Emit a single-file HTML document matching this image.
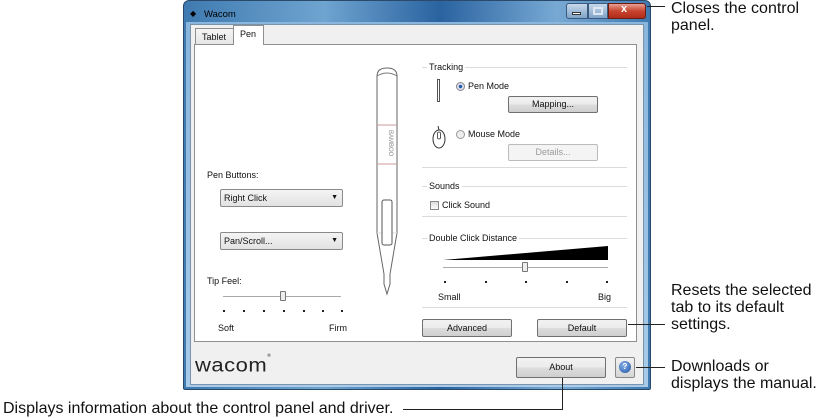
<!DOCTYPE html>
<html><head><style>
*{margin:0;padding:0;box-sizing:border-box}
body{width:819px;height:418px;background:#fff;position:relative;overflow:hidden;font-family:"Liberation Sans",sans-serif;}
.a{position:absolute}
.t{position:absolute;font-size:9px;color:#111;white-space:nowrap}
.ann{position:absolute;font-size:16px;color:#111;line-height:17px;white-space:nowrap}
.btn{position:absolute;border:1px solid #707070;border-radius:2px;background:linear-gradient(#f2f2f2,#ebebeb 50%,#dddddd 51%,#cfcfcf);font-size:9px;text-align:center;color:#111}
.dd{position:absolute;border:1px solid #8a8a8a;border-radius:2px;background:linear-gradient(#f4f4f4,#e2e2e2);font-size:9px;padding-left:3px;color:#111}
.sep{position:absolute;height:1px;background:#dcdcdc}
.dot{position:absolute;width:2px;height:2px;background:#222}
.ln{position:absolute;background:#222}
</style></head><body>
<div class="a" style="left:183px;top:0;width:468px;height:390px;border:1px solid #2b4a6b;border-radius:6px 6px 2px 2px;background:linear-gradient(90deg,#3f7ab0,#6fa4d0 30%,#2a63a0 55%,#78a9d4 80%,#3f7ab0)"></div>
<div class="a" style="left:186px;top:22px;width:462px;height:365px;background:linear-gradient(#8ab5dc,#a9cbe8);"></div>
<div class="t" style="left:190px;top:9px;font-size:8px;color:#000">&#9670;</div>
<div class="t" style="left:204px;top:9px;font-size:9.5px;color:#000">Wacom</div>
<div class="a" style="left:566px;top:3px;width:22px;height:16px;border:1px solid #3a5a80;border-radius:3px 0 0 3px;background:linear-gradient(#c7d8ea,#7fa3c8)"></div>
<div class="a" style="left:572px;top:12px;width:9px;height:3px;background:#fff;border:1px solid #333"></div>
<div class="a" style="left:588px;top:3px;width:20px;height:16px;border:1px solid #3a5a80;background:linear-gradient(#c7d8ea,#7fa3c8)"></div>
<div class="a" style="left:593px;top:7px;width:10px;height:8px;border:2px solid #dfe8f2"></div>
<div class="a" style="left:608px;top:3px;width:38px;height:16px;border:1px solid #6b1d14;border-radius:0 3px 3px 0;background:linear-gradient(#e8a091,#c8442f 50%,#b02c1a)"></div>
<div class="t" style="left:621px;top:3px;font-size:11px;font-weight:bold;color:#fff">x</div>
<div class="a" style="left:190px;top:24px;width:454px;height:361px;background:#f0f0f0;border:1px solid #7a93ad"></div>
<div class="a" style="left:195px;top:28px;width:39px;height:17px;border:1px solid #8e8f8f;border-bottom:none;background:linear-gradient(#f5f5f5,#e5e5e5)"></div>
<div class="t" style="left:202px;top:32px">Tablet</div>
<div class="a" style="left:194px;top:44px;width:443px;height:298px;background:#fff;border:1px solid #8e8f8f"></div>
<div class="a" style="left:233px;top:25px;width:31px;height:20px;border:1px solid #8e8f8f;border-bottom:none;background:#fff"></div>
<div class="t" style="left:240px;top:29px">Pen</div>
<div class="t" style="left:207px;top:170px">Pen Buttons:</div>
<div class="dd" style="left:220px;top:189px;width:123px;height:18px;line-height:16px">Right Click<span style="position:absolute;right:4px;font-size:7px">&#9660;</span></div>
<div class="dd" style="left:220px;top:232px;width:123px;height:18px;line-height:16px">Pan/Scroll...<span style="position:absolute;right:4px;font-size:7px">&#9660;</span></div>
<div class="t" style="left:207px;top:276px">Tip Feel:</div>
<div class="a" style="left:223px;top:296px;width:118px;height:1px;background:#aaa"></div>
<div class="a" style="left:280px;top:291px;width:6px;height:10px;border:1px solid #777;border-radius:1px;background:#eee"></div>
<div class="dot" style="left:223px;top:310px"></div><div class="dot" style="left:243px;top:310px"></div><div class="dot" style="left:263px;top:310px"></div><div class="dot" style="left:283px;top:310px"></div><div class="dot" style="left:303px;top:310px"></div><div class="dot" style="left:322px;top:310px"></div><div class="dot" style="left:341px;top:310px"></div>
<div class="t" style="left:218px;top:323px">Soft</div>
<div class="t" style="left:329px;top:323px">Firm</div>
<svg class="a" style="left:374px;top:66px" width="26" height="232" viewBox="0 0 26 232">
<path d="M3 10 Q3 2 13 2 Q23 2 23 10 L23 167 L16 208 L16 218 L13 228 L10 218 L10 208 L3 167 Z" fill="#fff" stroke="#666" stroke-width="1"/>
<path d="M3 10 Q13 4 23 10" fill="none" stroke="#777"/>
<line x1="3" y1="59" x2="23" y2="59" stroke="#c99"/>
<line x1="3" y1="98" x2="23" y2="98" stroke="#c99"/>
<line x1="3" y1="167" x2="23" y2="167" stroke="#ddd"/>
<rect x="8" y="134" width="10" height="45" rx="2" fill="#fff" stroke="#555"/>
<text x="15" y="64" font-size="6" fill="#888" transform="rotate(90 15 64)" font-family="Liberation Sans">BAMBOO</text>
</svg>
<div class="sep" style="left:422px;top:67px;width:205px"></div>
<div class="t" style="left:427px;top:62px;background:#fff;padding:0 2px">Tracking</div>
<div class="a" style="left:437px;top:79px;width:3px;height:23px;border:1px solid #555"></div>
<div class="a" style="left:456px;top:82px;width:9px;height:9px;border-radius:50%;border:1px solid #888;background:radial-gradient(#1e5fa8 30%,#dde 40%)"></div>
<div class="t" style="left:468px;top:81px">Pen Mode</div>
<div class="btn" style="left:508px;top:96px;width:90px;height:17px;line-height:15px">Mapping...</div>
<svg class="a" style="left:430px;top:124px" width="18" height="28"><path d="M8 2 L9 6" stroke="#333"/><ellipse cx="9" cy="15" rx="6" ry="9" fill="#fff" stroke="#333"/><rect x="7.5" y="8" width="3" height="7" rx="1.5" fill="#fff" stroke="#333" stroke-width=".8"/></svg>
<div class="a" style="left:456px;top:130px;width:9px;height:9px;border-radius:50%;border:1px solid #999;background:#eee"></div>
<div class="t" style="left:468px;top:129px">Mouse Mode</div>
<div class="btn" style="left:508px;top:144px;width:90px;height:17px;line-height:15px;border-color:#bbb;background:#f4f4f4;color:#999">Details...</div>
<div class="sep" style="left:422px;top:167px;width:205px"></div>
<div class="sep" style="left:422px;top:186px;width:205px"></div>
<div class="t" style="left:427px;top:181px;background:#fff;padding:0 2px">Sounds</div>
<div class="a" style="left:430px;top:201px;width:9px;height:9px;border:1px solid #888;background:linear-gradient(#ddd,#fafafa)"></div>
<div class="t" style="left:442px;top:200px">Click Sound</div>
<div class="sep" style="left:422px;top:216px;width:205px"></div>
<div class="sep" style="left:422px;top:238px;width:205px"></div>
<div class="t" style="left:427px;top:233px;background:#fff;padding:0 2px">Double Click Distance</div>
<svg class="a" style="left:443px;top:245px" width="166" height="16"><path d="M0 15 L165 1 L165 15 Z" fill="#000"/></svg>
<div class="a" style="left:443px;top:267px;width:165px;height:1px;background:#aaa"></div>
<div class="a" style="left:522px;top:262px;width:6px;height:10px;border:1px solid #777;border-radius:1px;background:#eee"></div>
<div class="dot" style="left:444px;top:281px"></div><div class="dot" style="left:485px;top:281px"></div><div class="dot" style="left:525px;top:281px"></div><div class="dot" style="left:566px;top:281px"></div><div class="dot" style="left:606px;top:281px"></div>
<div class="t" style="left:438px;top:292px">Small</div>
<div class="t" style="left:598px;top:292px">Big</div>
<div class="sep" style="left:422px;top:307px;width:205px"></div>
<div class="btn" style="left:422px;top:319px;width:90px;height:18px;line-height:16px">Advanced</div>
<div class="btn" style="left:537px;top:319px;width:90px;height:18px;line-height:16px">Default</div>
<div class="t" style="left:195px;top:352px;font-size:22px;color:#222;letter-spacing:0.5px;transform:scaleY(0.9)">wacom<span style="font-size:5px;vertical-align:top">®</span></div>
<div class="btn" style="left:516px;top:357px;width:90px;height:21px;line-height:19px">About</div>
<div class="a" style="left:615px;top:357px;width:20px;height:21px;border:1px solid #888;border-radius:2px;background:linear-gradient(#f2f2f2,#d5d5d5)"></div>
<div class="a" style="left:619px;top:361px;width:12px;height:12px;border-radius:50%;background:radial-gradient(circle at 40% 35%,#8ab4ec,#1c4fa0);color:#fff;font-size:8px;font-weight:bold;text-align:center;line-height:12px">?</div>
<div class="ln" style="left:647px;top:6px;width:18px;height:1px"></div>
<div class="ann" style="left:671px;top:0px">Closes the control<br>panel.</div>
<div class="ln" style="left:628px;top:324px;width:37px;height:1px"></div>
<div class="ann" style="left:671px;top:282px">Resets the selected<br>tab to its default<br>settings.</div>
<div class="ln" style="left:636px;top:367px;width:29px;height:1px"></div>
<div class="ann" style="left:671px;top:358px">Downloads or<br>displays the manual.</div>
<div class="ann" style="left:3px;top:400px">Displays information about the control panel and driver.</div>
<div class="ln" style="left:403px;top:409px;width:160px;height:1px"></div>
<div class="ln" style="left:562px;top:378px;width:1px;height:32px"></div>
</body></html>
